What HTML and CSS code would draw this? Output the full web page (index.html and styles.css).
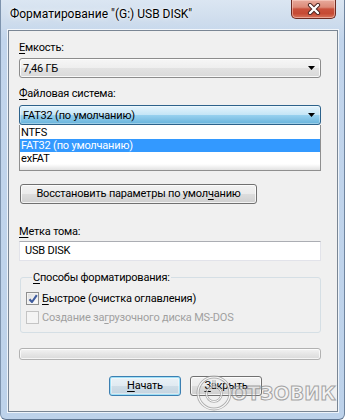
FILE: index.html
```html
<!DOCTYPE html>
<html lang="ru">
<head>
<meta charset="utf-8">
<title>Форматирование</title>
<link rel="stylesheet" href="styles.css">
</head>
<body>
<div class="window">
  <div class="titlebar">
    <span class="title">Форматирование "(G:) USB DISK"</span>
    <div class="close">
      <svg width="14" height="12" viewBox="0 0 14 12">
        <path d="M3 2 L11 10 M11 2 L3 10" stroke="#4a2420" stroke-width="4.2" stroke-linecap="round" fill="none"/>
        <path d="M3 2 L11 10 M11 2 L3 10" stroke="#ffffff" stroke-width="2.4" stroke-linecap="round" fill="none"/>
      </svg>
    </div>
  </div>
  <div class="client">
    <div class="label l1"><u>Е</u>мкость:</div>
    <div class="combo">
      <span>7,46 ГБ</span>
      <svg class="arrow" width="7" height="4" viewBox="0 0 7 4"><path d="M0 0h7l-3.5 4z" fill="#000"/></svg>
    </div>
    <div class="label l2"><u>Ф</u>айловая система:</div>
    <div class="combo open">
      <span>FAT32 (по умолчанию)</span>
      <svg class="arrow" width="7" height="4" viewBox="0 0 7 4"><path d="M0 0h7l-3.5 4z" fill="#000"/></svg>
    </div>
    <ul class="list">
      <li>NTFS</li>
      <li class="sel">FAT32 (по умолчанию)</li>
      <li>exFAT</li>
    </ul>
    <div class="btn restore"><span>Восстановить параметры по умол<u>ч</u>анию</span></div>
    <div class="label l3"><u>М</u>етка тома:</div>
    <div class="input">USB DISK</div>
    <fieldset class="group">
      <legend><u>С</u>пособы форматирования:</legend>
      <div class="check-row">
        <span class="box checked">
          <svg width="10" height="10" viewBox="0 0 10 10"><path d="M1.5 5.2 L4 8 L8.8 1.2" stroke="#3f5c9e" stroke-width="2.1" fill="none" stroke-linejoin="round"/></svg>
        </span>
        <span><u>Б</u>ыстрое (очистка оглавления)</span>
      </div>
      <div class="check-row disabled">
        <span class="box"></span>
        <span>Создание за<u>г</u>рузочного диска MS-DOS</span>
      </div>
    </fieldset>
    <div class="progress"></div>
    <div class="buttons">
      <div class="btn default"><span><u>Н</u>ачать</span></div>
      <div class="btn"><span><u>З</u>акрыть</span></div>
    </div>
  </div>
  <div class="watermark">
    <svg width="36" height="36" viewBox="0 0 36 36">
      <circle cx="18" cy="18" r="16" fill="none" stroke="#9a9a9a" stroke-width="3"/>
      <circle cx="18" cy="18" r="16" fill="none" stroke="#ffffff" stroke-width="1.2"/>
      <circle cx="18" cy="19" r="7.5" fill="none" stroke="#9a9a9a" stroke-width="2.5"/>
      <circle cx="18" cy="19" r="7.5" fill="none" stroke="#ffffff" stroke-width="1"/>
      <path d="M18 5v8" stroke="#9a9a9a" stroke-width="3"/>
      <path d="M18 5v8" stroke="#ffffff" stroke-width="1"/>
    </svg>
    <span class="wm-text">ОТЗОВИК</span>
  </div>
</div>
</body>
</html>
```
FILE: styles.css
```css
* { box-sizing: border-box; }
html, body {
  margin: 0;
  padding: 0;
  width: 346px;
  height: 420px;
  overflow: hidden;
  background: #ffffff;
}
u { text-decoration: underline; text-underline-offset: 2px; text-decoration-thickness: 1px; }

.window {
  position: relative;
  width: 345px;
  height: 420px;
  background: linear-gradient(180deg, #dbe6f2 0px, #cfdded 20px, #c2d5ec 40px, #bdd2ea 100%);
  border-left: 1px solid #7d93ad;
  border-right: 1px solid #6f849e;
  border-bottom: 1px solid #5f7590;
  border-radius: 0 0 6px 6px;
  font-family: Roboto, "Noto Sans", sans-serif;
  font-size: 11px;
  letter-spacing: -0.2px;
  color: #000;
}

.titlebar {
  height: 30px;
  display: flex;
  justify-content: space-between;
  align-items: flex-start;
  padding-left: 9px;
  padding-right: 8px;
}
.title {
  margin-top: 6px;
  font-size: 12px;
  letter-spacing: 0;
  line-height: 16px;
  color: #000;
  text-shadow: 0 0 6px rgba(255,255,255,0.9), 0 0 2px rgba(255,255,255,0.9);
}
.close {
  width: 45px;
  height: 19px;
  border: 1px solid #6d2b22;
  border-top: none;
  border-radius: 0 0 5px 5px;
  background: linear-gradient(180deg, #e8aa9c 0%, #dc8a78 40%, #c9513c 50%, #c64a34 75%, #d7745c 100%);
  box-shadow: inset 0 0 0 1px rgba(255,220,210,0.5);
  display: flex;
  align-items: center;
  justify-content: center;
}

.client {
  margin-left: 7px;
  width: 330px;
  height: 382px;
  background: #f0f0f0;
  border: 1px solid #7a8694;
  box-shadow: 0 0 0 1px rgba(255,255,255,0.75);
  padding: 0 15px 0 10px;
  display: flex;
  flex-direction: column;
  align-items: flex-start;
}

.label {
  line-height: 15px;
  height: 15px;
}
.l1 { margin-top: 9px; }
.l2 { margin-top: 8px; }
.l3 { margin-top: 20px; }

.combo {
  margin-top: 3px;
  width: 302px;
  height: 20px;
  border: 1px solid #8c8c8c;
  border-radius: 3px;
  background: linear-gradient(180deg, #f6f6f6 0%, #eeeeee 50%, #e2e2e2 51%, #d9d9d9 100%);
  box-shadow: inset 0 0 0 1px rgba(255,255,255,0.8);
  display: flex;
  align-items: center;
  justify-content: space-between;
  padding: 0 5px 0 3px;
  line-height: 15px;
}
.combo.open {
  margin-top: 4px;
  border-color: #2c628b;
  background: linear-gradient(180deg, #e5f4fc 0%, #c4e5f6 50%, #98d1ef 51%, #68b3db 100%);
  box-shadow: inset 0 0 0 1px rgba(255,255,255,0.35);
}
.arrow { display: block; }

.list {
  margin: 0;
  padding: 1px 0 0 0;
  list-style: none;
  width: 302px;
  height: 46px;
  border: 1px solid #8f8f8f;
  border-top: none;
  background: linear-gradient(180deg, #ffffff 0px, #ffffff 39px, #e2e2e2 45px);
}
.list li {
  height: 13px;
  line-height: 13px;
  padding-left: 1px;
}
.list li.sel {
  background: #3399ff;
  color: #fff;
}

.btn {
  height: 20px;
  border: 1px solid #707070;
  border-radius: 3px;
  background: linear-gradient(180deg, #f2f2f2 0%, #ebebeb 50%, #dddddd 51%, #cfcfcf 100%);
  box-shadow: inset 0 0 0 1px rgba(255,255,255,0.75);
  text-align: center;
  line-height: 18px;
  white-space: nowrap;
}
.restore {
  margin-top: 13px;
  margin-left: 1px;
  width: 237px;
}

.input {
  margin-top: 2px;
  width: 302px;
  height: 20px;
  background: #fff;
  border: 1px solid #e2e3ea;
  border-top-color: #abadb3;
  padding-left: 5px;
  line-height: 18px;
}

.group {
  margin: 9px 0 0 1px;
  width: 301px;
  border: 1px solid #d5dfe5;
  border-radius: 3px;
  padding: 4px 0 5px 5px;
  min-width: 0;
}
.group legend {
  padding: 0 1px;
  margin-left: 6px;
  line-height: 15px;
}
.check-row {
  height: 19px;
  display: flex;
  align-items: center;
  gap: 3px;
  line-height: 15px;
}
.check-row.disabled { color: #a0a0a0; }
.box {
  width: 13px;
  height: 13px;
  border: 1px solid #8e8f8f;
  background: linear-gradient(135deg, #dcdcdc 0%, #f2f2f2 60%, #ffffff 100%);
  box-shadow: inset 0 0 0 1px #f4f4f4;
  display: flex;
  align-items: center;
  justify-content: center;
}
.disabled .box {
  border-color: #c4c4c4;
  background: #f4f4f4;
  box-shadow: none;
}

.progress {
  margin-top: 15px;
  width: 302px;
  height: 12px;
  border: 1px solid #b2b2b2;
  border-radius: 3px;
  background: linear-gradient(180deg, #f3f3f3 0%, #e6e6e6 50%, #dadada 100%);
  box-shadow: inset 0 0 0 1px rgba(255,255,255,0.7);
}

.buttons {
  margin-top: 16px;
  margin-left: 90px;
  display: flex;
  gap: 9px;
}
.buttons .btn { width: 72px; }
.btn.default {
  border-color: #3c7fb1;
  background: linear-gradient(180deg, #eaf2f7 0%, #e0eaf1 50%, #cfdde7 51%, #c3d3df 100%);
  box-shadow: inset 0 0 0 1px #9fe0f7, inset 0 0 0 2px rgba(255,255,255,0.4);
}

.watermark {
  position: absolute;
  left: 195px;
  top: 375px;
  display: flex;
  align-items: center;
  opacity: 0.75;
  pointer-events: none;
}
.wm-text {
  font-family: "DejaVu Sans", sans-serif;
  font-weight: bold;
  font-size: 19px;
  letter-spacing: 0px;
  color: rgba(255,255,255,0.3);
  -webkit-text-stroke: 1px #8a8a8a;
  margin-left: -1px;
}
```
